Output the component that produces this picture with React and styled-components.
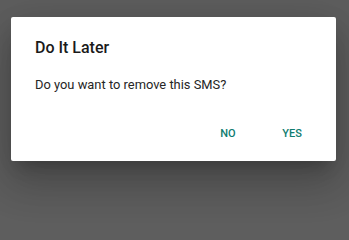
import React from "react";
import styled, { createGlobalStyle } from "styled-components";

const Global = createGlobalStyle`
  html, body { margin: 0; padding: 0; overflow: hidden; }
  body {
    background: #5e5e5e;
    font-family: Roboto, "Liberation Sans", sans-serif;
    -webkit-font-smoothing: antialiased;
  }
`;

const Screen = styled.div`
  width: 349px;
  height: 230px;
  padding: 17px 13px 0 11px;
  box-sizing: border-box;
`;

const Dialog = styled.div`
  width: 325px;
  height: 144px;
  box-sizing: border-box;
  background: #ffffff;
  border-radius: 2px;
  box-shadow: 0 11px 15px -7px rgba(0,0,0,0.22), 0 24px 38px 3px rgba(0,0,0,0.14), 0 9px 46px 8px rgba(0,0,0,0.12);
  display: flex;
  flex-direction: column;
  padding: 21px 0 0 0;
`;

const Title = styled.h2`
  margin: 0 24px;
  font-size: 16px;
  font-weight: 500;
  line-height: 20px;
  color: #1a1a1a;
`;

const Message = styled.p`
  margin: 17px 24px 0;
  font-size: 12.9px;
  font-weight: 400;
  line-height: 20px;
  color: #262626;
`;

const Actions = styled.div`
  display: flex;
  justify-content: flex-end;
  padding: 0 12px;
  margin-top: 29px;
`;

const Button = styled.button`
  min-width: 64px;
  height: 20px;
  padding: 0 8px;
  border: none;
  background: transparent;
  font-family: Roboto, "Liberation Sans", sans-serif;
  font-size: 11px;
  font-weight: 500;
  color: #0f7c70;
  text-transform: uppercase;
  line-height: 20px;
`;

export default function App() {
  return (
    <Screen>
      <Global />
      <Dialog>
        <Title>Do It Later</Title>
        <Message>Do you want to remove this SMS?</Message>
        <Actions>
          <Button>No</Button>
          <Button>Yes</Button>
        </Actions>
      </Dialog>
    </Screen>
  );
}
